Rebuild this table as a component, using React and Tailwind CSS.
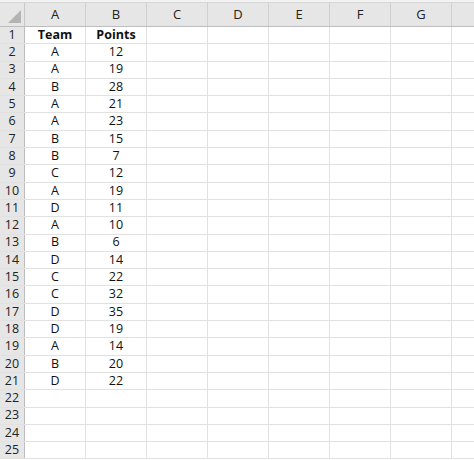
const cols = ["A", "B", "C", "D", "E", "F", "G", ""];

const data = [
  ["Team", "Points"],
  ["A", "12"],
  ["A", "19"],
  ["B", "28"],
  ["A", "21"],
  ["A", "23"],
  ["B", "15"],
  ["B", "7"],
  ["C", "12"],
  ["A", "19"],
  ["D", "11"],
  ["A", "10"],
  ["B", "6"],
  ["D", "14"],
  ["C", "22"],
  ["C", "32"],
  ["D", "35"],
  ["D", "19"],
  ["A", "14"],
  ["B", "20"],
  ["D", "22"],
];

const font = { fontFamily: '"Open Sans", "Noto Sans", sans-serif' };

export default function App() {
  const rows = Array.from({ length: 25 }, (_, i) => i + 1);

  return (
    <div className="w-[474px] h-[460px] overflow-hidden bg-white text-[#111]" style={font}>
      {/* formula bar remnant */}
      <div className="h-[3px] bg-[#f3f3f3] border-b border-[#d6d6d6]" />

      {/* column headers */}
      <div className="flex h-[24px] bg-[#e6e6e6] border-b border-[#bdbdbd]">
        <div className="w-[25px] shrink-0 border-r border-[#c8c8c8] relative">
          <div className="absolute right-[3px] bottom-[3px] w-0 h-0 border-l-[13px] border-l-transparent border-b-[13px] border-b-[#b4b4b4]" />
        </div>
        {cols.map((c, i) => (
          <div
            key={i}
            className="w-[61px] shrink-0 border-r border-[#cfcfcf] flex items-center justify-center text-[13px] text-[#222]"
          >
            {c}
          </div>
        ))}
      </div>

      {/* rows */}
      {rows.map((r) => {
        const row = data[r - 1] || ["", ""];
        const bold = r === 1;
        return (
          <div key={r} className="flex h-[17.3px] border-b border-[#e1e1e1]">
            <div className="w-[25px] shrink-0 bg-[#e6e6e6] border-r border-[#bdbdbd] flex items-center justify-center text-[12.5px] text-[#222] leading-none">
              {r}
            </div>
            {cols.map((_, i) => (
              <div
                key={i}
                className={`w-[61px] shrink-0 border-r border-[#e1e1e1] flex items-center justify-center text-[12.5px] leading-none ${bold ? "font-bold" : ""}`}
              >
                {i < 2 ? row[i] : ""}
              </div>
            ))}
          </div>
        );
      })}
    </div>
  );
}
